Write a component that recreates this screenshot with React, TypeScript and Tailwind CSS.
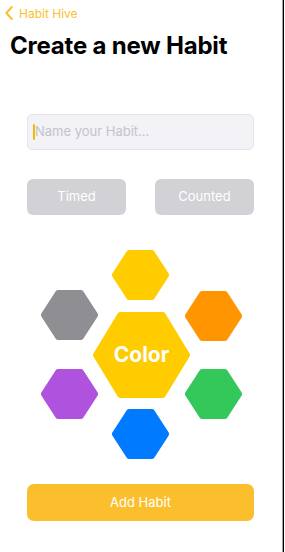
import React from 'react';

// rounded flat-top hexagon, drawn as a polygon with a round stroke
function Hex({ w, h, color, children }: { w: number; h: number; color: string; children?: React.ReactNode }) {
  const r = 3;
  const pts = [
    [w * 0.25 + r, r],
    [w * 0.75 - r, r],
    [w - r, h / 2],
    [w * 0.75 - r, h - r],
    [w * 0.25 + r, h - r],
    [r, h / 2],
  ]
    .map((p) => p.join(','))
    .join(' ');
  return (
    <div className="relative flex items-center justify-center" style={{ width: w, height: h }}>
      <svg width={w} height={h} className="absolute inset-0">
        <polygon points={pts} fill={color} stroke={color} strokeWidth={6} strokeLinejoin="round" />
      </svg>
      {children && <span className="relative text-white text-[21px] font-bold">{children}</span>}
    </div>
  );
}

export default function App() {
  return (
    <div
      className="w-[284px] h-[552px] bg-white border-r border-black shadow-[inset_-1px_0_0_#9ca3af] flex flex-col"
      style={{ fontFamily: 'Inter, "Liberation Sans", sans-serif' }}
    >
      {/* nav */}
      <div className="flex items-center gap-[6px] pl-[5px] pt-[7px] h-[19px] text-[#fbbf2d] text-[12px]">
        <svg width="8" height="14" viewBox="0 0 8 14" fill="none">
          <path d="M6.8 1 L1.3 7 L6.8 13" stroke="#fbbf2d" strokeWidth="1.9" strokeLinecap="round" strokeLinejoin="round" />
        </svg>
        <span className="leading-none pt-[1px]">Habit Hive</span>
      </div>

      <h1 className="mt-[15px] ml-[10px] text-[24px] font-bold text-black leading-none tracking-[-0.2px]">Create a new Habit</h1>

      {/* name input */}
      <div className="mt-[56px] ml-[27px] mr-[29px] h-[36px] rounded-[5px] bg-[#f2f2f7] border border-[#e5e5ea] flex items-center pl-[5px]">
        <div className="w-[2px] h-[16px] bg-[#f5b800] rounded-full" />
        <span className="text-[13px] text-[#c4c4c8]">Name your Habit...</span>
      </div>

      {/* type buttons */}
      <div className="mt-[29px] ml-[27px] mr-[29px] flex justify-between">
        <button className="w-[99px] h-[36px] rounded-[6px] bg-[#d1d1d6] text-white text-[13px]">Timed</button>
        <button className="w-[99px] h-[36px] rounded-[6px] bg-[#d1d1d6] text-white text-[13px]">Counted</button>
      </div>

      {/* color picker */}
      <div className="relative mt-[35px] ml-[41px] w-[201px] h-[208px]">
        <div className="absolute left-[71px] top-0"><Hex w={57} h={50} color="#ffcc00" /></div>
        <div className="absolute left-0 top-[40px]"><Hex w={57} h={50} color="#8e8e93" /></div>
        <div className="absolute left-[144px] top-[41px]"><Hex w={57} h={50} color="#ff9500" /></div>
        <div className="absolute left-[52px] top-[62px]"><Hex w={97} h={86} color="#ffcc00">Color</Hex></div>
        <div className="absolute left-0 top-[119px]"><Hex w={57} h={50} color="#af52de" /></div>
        <div className="absolute left-[144px] top-[119px]"><Hex w={57} h={50} color="#34c759" /></div>
        <div className="absolute left-[71px] top-[159px]"><Hex w={57} h={50} color="#007aff" /></div>
      </div>

      <button className="mt-[26px] ml-[27px] mr-[29px] h-[37px] rounded-[7px] bg-[#fbbf2d] text-white text-[13px]">Add Habit</button>
    </div>
  );
}
